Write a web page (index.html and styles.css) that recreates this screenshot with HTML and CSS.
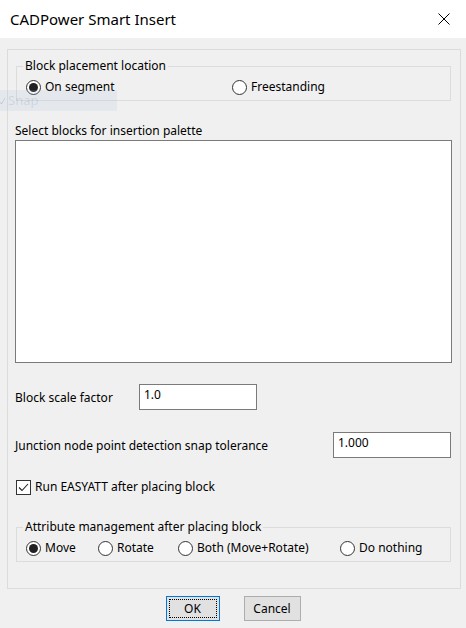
FILE: index.html
```html
<!DOCTYPE html>
<html>
<head>
<meta charset="utf-8">
<link rel="stylesheet" href="styles.css">
</head>
<body>
<div class="titlebar">
  <span class="title">CADPower Smart Insert</span>
  <svg class="close" width="12" height="12" viewBox="0 0 12 12"><path d="M0.5 0.5 L11.5 11.5 M11.5 0.5 L0.5 11.5" stroke="#000" stroke-width="1" fill="none"/></svg>
</div>
<div class="panel">
  <fieldset class="group g1">
    <legend>Block placement location</legend>
    <div class="radios">
      <label class="radio opt-seg"><span class="dot checked"></span>On segment</label>
      <label class="radio"><span class="dot"></span>Freestanding</label>
    </div>
  </fieldset>
  <div class="list-label">Select blocks for insertion palette</div>
  <div class="listbox"></div>
  <div class="field-row scale-row">
    <span class="scale-label">Block scale factor</span>
    <div class="input">1.0</div>
  </div>
  <div class="field-row junction-row">
    <span>Junction node point detection snap tolerance</span>
    <div class="input">1.000</div>
  </div>
  <div class="check-row">
    <span class="checkbox"><svg width="13" height="13" viewBox="0 0 13 13"><path d="M2 6.5 L5 9.5 L11 3" stroke="#222" stroke-width="1.1" fill="none"/></svg></span>
    <span>Run EASYATT after placing block</span>
  </div>
  <fieldset class="group g2">
    <legend>Attribute management after placing block</legend>
    <div class="radios">
      <label class="radio opt-move"><span class="dot checked"></span>Move</label>
      <label class="radio opt-rotate"><span class="dot"></span>Rotate</label>
      <label class="radio opt-both"><span class="dot"></span>Both (Move+Rotate)</label>
      <label class="radio"><span class="dot"></span>Do nothing</label>
    </div>
  </fieldset>
</div>
<div class="buttons">
  <button class="btn ok">OK</button>
  <button class="btn cancel">Cancel</button>
</div>
<div class="ghost"><svg class="ghost-check" width="5" height="8" viewBox="0 0 5 8"><path d="M0 5 L1.5 7 L5 1" stroke="rgba(120,145,180,0.3)" stroke-width="1" fill="none"/></svg><span>Snap</span></div>
</body>
</html>
```
FILE: styles.css
```css
* { box-sizing: border-box; }
body {
  margin: 0;
  width: 466px;
  height: 628px;
  background: #f0f0f0;
  font-family: "Noto Sans", "Open Sans", sans-serif;
  font-size: 12px;
  color: #000;
  overflow: hidden;
  position: relative;
}
.titlebar {
  height: 38px;
  background: #fff;
  display: flex;
  align-items: center;
  justify-content: space-between;
  padding: 0 16px 0 10px;
}
.title { font-size: 15px; line-height: 20px; }
.close { display: block; }
.panel {
  margin: 11px 0 0 7px;
  width: 454px;
  height: 540px;
  border: 1px solid #dcdcdc;
  padding: 0 0 0 7px;
  display: flex;
  flex-direction: column;
  align-items: flex-start;
}
.group {
  margin: 8px 0 0 1px;
  width: 435px;
  min-width: 0;
  border: 1px solid #dcdcdc;
  padding: 0 0 5px 9px;
}
.group legend {
  font-size: 12px;
  line-height: 16px;
  padding: 0 2px;
  margin-left: -3px;
}
.g2 { margin-top: 24px; }
.radios {
  display: flex;
  align-items: center;
  margin-top: 5px;
  height: 16px;
}
.radio {
  display: flex;
  align-items: center;
  gap: 4px;
  line-height: 16px;
  white-space: nowrap;
}
.opt-seg { width: 206px; }
.opt-move { width: 72px; }
.opt-rotate { width: 80px; }
.opt-both { width: 162px; }
.dot {
  flex: none;
  width: 15px;
  height: 15px;
  border: 1px solid #333;
  border-radius: 50%;
  background: #fff;
  display: flex;
  align-items: center;
  justify-content: center;
}
.dot.checked::after {
  content: "";
  width: 9px;
  height: 9px;
  border-radius: 50%;
  background: #222;
}
.list-label { margin-top: 22px; line-height: 16px; }
.listbox {
  margin-top: 1px;
  width: 437px;
  height: 223px;
  background: #fff;
  border: 1px solid #7a7a7a;
}
.field-row { display: flex; align-items: center; }
.scale-row { margin-top: 21px; }
.scale-label { width: 124px; }
.junction-row { margin-top: 22px; width: 436px; justify-content: space-between; }
.input {
  width: 118px;
  height: 26px;
  border: 1px solid #7a7a7a;
  background: #fff;
  padding: 1px 0 0 4px;
  line-height: 17px;
}
.check-row {
  margin: 21px 0 0 1px;
  display: flex;
  align-items: center;
  gap: 4px;
  line-height: 16px;
}
.checkbox {
  width: 15px;
  height: 15px;
  border: 1px solid #333;
  background: #fff;
  display: flex;
  align-items: center;
  justify-content: center;
}
.checkbox svg { display: block; }
.buttons {
  display: flex;
  justify-content: center;
  gap: 24px;
  margin-top: 7px;
}
.btn {
  height: 25px;
  background: #e1e1e1;
  border: 1px solid #adadad;
  font-family: inherit;
  font-size: 12px;
  color: #000;
  padding: 0;
}
.ok {
  width: 54px;
  border-color: #0078d7;
  outline: 1px dotted #000;
  outline-offset: -4px;
}
.cancel { width: 57px; }
.ghost {
  position: absolute;
  left: 0;
  top: 90px;
  width: 117px;
  height: 21px;
  background: rgba(170, 195, 225, 0.16);
  color: rgba(120, 145, 180, 0.22);
  font-size: 13px;
  line-height: 21px;
  display: flex;
  align-items: center;
  gap: 3px;
}
.ghost-check { display: block; flex: none; }
```
